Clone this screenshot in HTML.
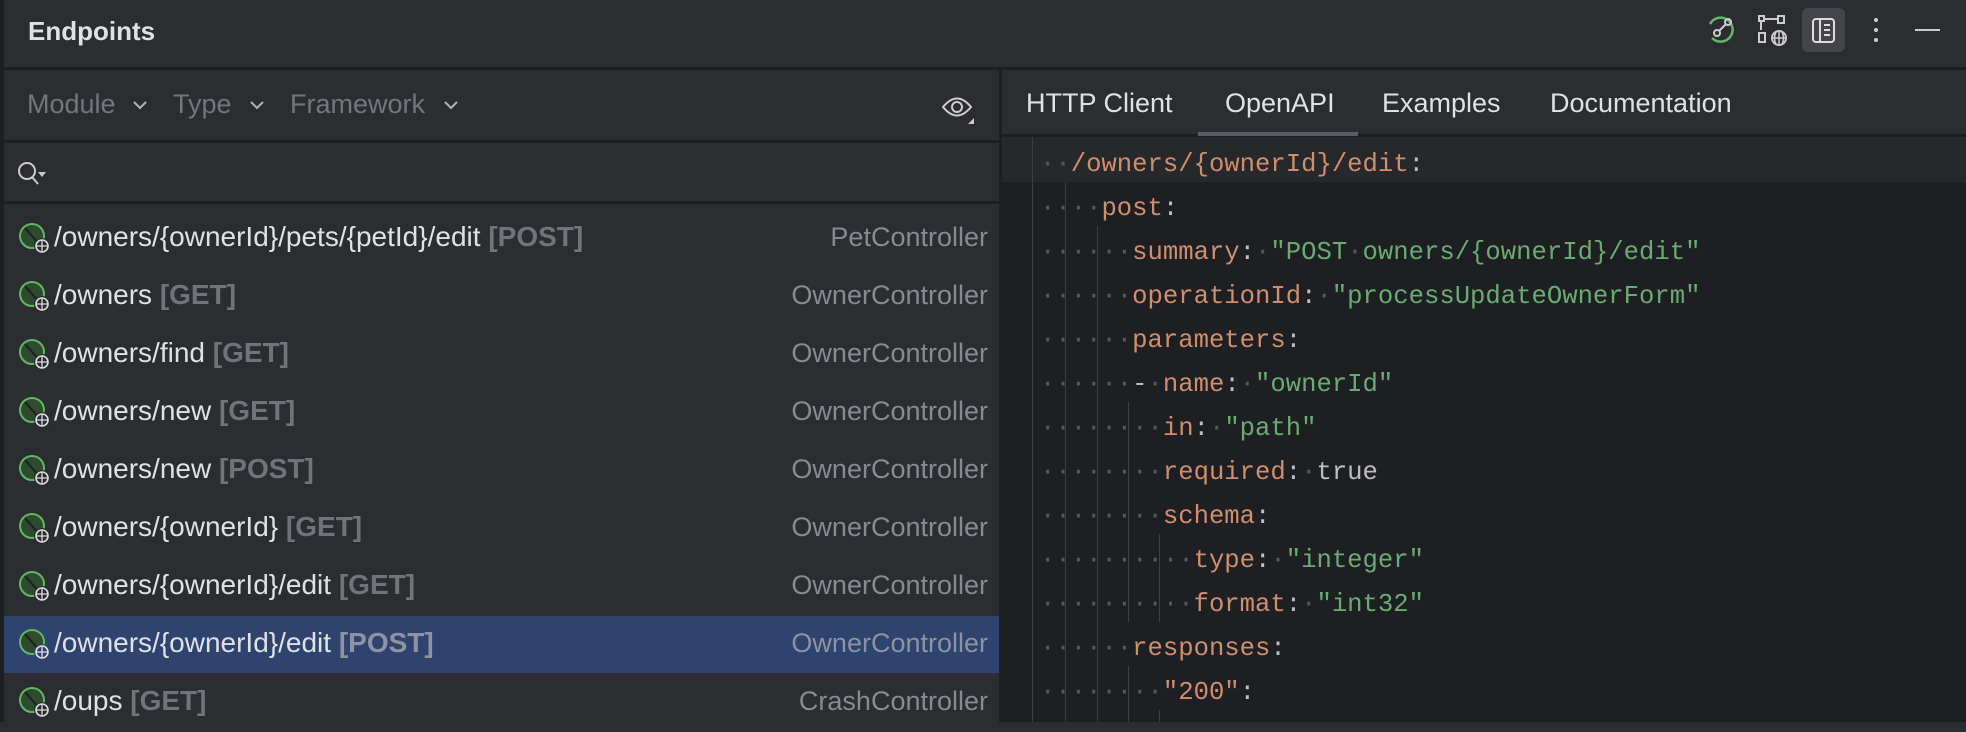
<!DOCTYPE html>
<html><head><meta charset="utf-8"><style>
*{margin:0;padding:0;box-sizing:border-box}
body{width:1966px;height:722px;background:#2b2d30;overflow:hidden;position:relative;font-family:"Liberation Sans",sans-serif;color:#dfe1e5}
.abs{position:absolute}
.hdr{left:0;top:0;width:1966px;height:70px;background:#2b2d30;border-bottom:3px solid #1e1f22}
.title{left:28px;top:16px;font-size:26px;font-weight:bold;color:#dfe1e5}
.filter{left:0;top:70px;width:999px;height:73px;border-bottom:3px solid #1e1f22}
.ftxt{top:89px;font-size:27px;color:#72767d}
.search{left:0;top:143px;width:999px;height:61px;border-bottom:3px solid #1e1f22}
.row{left:4px;width:995px;height:58px;font-size:27px}
.row .ic{position:absolute;left:14px;top:12px}
.row .p{position:absolute;left:50px;top:11px;color:#dfe1e5;white-space:pre;font-size:28px}
.row .p b{color:#6f737a}
.row .c{position:absolute;right:11px;top:12px;color:#868a91}
.sel{background:#2e436e}
.sel .p b,.sel .c{color:#8c93a3}
.div{left:999px;top:70px;width:3px;height:652px;background:#1e1f22}
.tabs{left:1002px;top:70px;width:964px;height:66px;background:#2b2d30;border-bottom:2px solid #1e1f22}
.tab{top:88px;font-size:27px;color:#dfe1e5}
.code{left:1002px;top:136px;width:964px;height:586px;background:#1e1f22}
.cl{position:absolute;left:1040px;font-family:"Liberation Mono",monospace;font-size:25.6px;white-space:pre;height:44px;line-height:44px}
.k{color:#cf8e6d}.s{color:#6aab73}.d{color:#55575c}.w{color:#bcbec4}
.g{position:absolute;width:1px;background:#3c3e42}
</style></head><body>
<div class="abs hdr"></div>
<div class="abs" style="left:0;top:0;width:4px;height:722px;background:#1e1f22"></div>
<div class="abs title">Endpoints</div>
<svg class="abs" style="left:1704px;top:12px" width="34" height="34" viewBox="0 0 34 34"><path d="M8 26 A12 12 0 1 0 6 12" fill="none" stroke="#5fb865" stroke-width="2.5"/><circle cx="13" cy="21" r="3" fill="none" stroke="#ccc" stroke-width="2"/><circle cx="24" cy="10" r="3" fill="none" stroke="#ccc" stroke-width="2"/><path d="M15 19 L22 12" stroke="#ccc" stroke-width="2"/></svg>
<svg class="abs" style="left:1756px;top:12px" width="34" height="34" viewBox="0 0 34 34"><rect x="3" y="4" width="5" height="5" fill="none" stroke="#ccc" stroke-width="2"/><rect x="22" y="4" width="6" height="7" fill="none" stroke="#ccc" stroke-width="2"/><path d="M9 7H21M5 10V18" stroke="#ccc" stroke-width="2"/><rect x="3" y="21" width="6" height="9" fill="none" stroke="#ccc" stroke-width="2"/><circle cx="23" cy="26" r="7" fill="none" stroke="#ccc" stroke-width="2"/><path d="M16 26H30M23 19V33M20 20Q17 26 20 32M26 20Q29 26 26 32" fill="none" stroke="#ccc" stroke-width="1.5"/></svg>
<div class="abs" style="left:1802px;top:8px;width:43px;height:44px;border-radius:6px;background:#43454a"></div>
<svg class="abs" style="left:1810px;top:17px" width="28" height="28" viewBox="0 0 28 28"><rect x="3" y="2" width="21" height="23" rx="3" fill="none" stroke="#ddd" stroke-width="2"/><path d="M10 3V24M14 8H20M14 13H20M14 18H20" stroke="#ddd" stroke-width="2"/></svg>
<div class="abs" style="left:1874px;top:18px;width:4px;height:4px;border-radius:2px;background:#ccc;box-shadow:0 10px 0 #ccc,0 20px 0 #ccc"></div>
<div class="abs" style="left:1915px;top:29px;width:25px;height:2px;background:#ccc"></div>

<div class="abs filter"></div>
<div class="abs ftxt" style="left:27px">Module</div>
<div class="abs ftxt" style="left:173px">Type</div>
<div class="abs ftxt" style="left:290px">Framework</div>
<svg class="abs" style="left:132px;top:99px" width="16" height="12" viewBox="0 0 16 12"><path d="M2 3L8 9L14 3" fill="none" stroke="#b0b3b8" stroke-width="2"/></svg>
<svg class="abs" style="left:249px;top:99px" width="16" height="12" viewBox="0 0 16 12"><path d="M2 3L8 9L14 3" fill="none" stroke="#b0b3b8" stroke-width="2"/></svg>
<svg class="abs" style="left:443px;top:99px" width="16" height="12" viewBox="0 0 16 12"><path d="M2 3L8 9L14 3" fill="none" stroke="#b0b3b8" stroke-width="2"/></svg>
<svg class="abs" style="left:940px;top:90px" width="36" height="36" viewBox="0 0 36 36"><path d="M3 17 Q17 0 31 17 Q17 34 3 17Z" fill="none" stroke="#ccc" stroke-width="2"/><circle cx="17" cy="17" r="5" fill="none" stroke="#ccc" stroke-width="2"/><path d="M34 28V34H28Z" fill="#ccc"/></svg>
<div class="abs search"></div>
<svg class="abs" style="left:16px;top:160px" width="34" height="30" viewBox="0 0 34 30"><circle cx="11" cy="11" r="8" fill="none" stroke="#ccc" stroke-width="2"/><path d="M16 17L22 24" stroke="#ccc" stroke-width="2"/><path d="M22 12H30L26 17Z" fill="#ccc"/></svg>

<div class="abs row" style="top:210px"><svg class="ic" width="34" height="34" viewBox="0 0 34 34"><circle cx="14" cy="14" r="12" fill="#2f4a2f" stroke="#5fb865" stroke-width="2"/><path d="M7 6L22 23" stroke="#1e1f22" stroke-width="2"/><circle cx="24" cy="24" r="8" fill="#2b2d30"/><circle cx="24" cy="24" r="6" fill="none" stroke="#ddd" stroke-width="1.6"/><path d="M18 24H30M24 18V30" stroke="#ddd" stroke-width="1.3"/></svg><span class="p">/owners/{ownerId}/pets/{petId}/edit <b>[POST]</b></span><span class="c">PetController</span></div>
<div class="abs row" style="top:268px"><svg class="ic" width="34" height="34" viewBox="0 0 34 34"><circle cx="14" cy="14" r="12" fill="#2f4a2f" stroke="#5fb865" stroke-width="2"/><path d="M7 6L22 23" stroke="#1e1f22" stroke-width="2"/><circle cx="24" cy="24" r="8" fill="#2b2d30"/><circle cx="24" cy="24" r="6" fill="none" stroke="#ddd" stroke-width="1.6"/><path d="M18 24H30M24 18V30" stroke="#ddd" stroke-width="1.3"/></svg><span class="p">/owners <b>[GET]</b></span><span class="c">OwnerController</span></div>
<div class="abs row" style="top:326px"><svg class="ic" width="34" height="34" viewBox="0 0 34 34"><circle cx="14" cy="14" r="12" fill="#2f4a2f" stroke="#5fb865" stroke-width="2"/><path d="M7 6L22 23" stroke="#1e1f22" stroke-width="2"/><circle cx="24" cy="24" r="8" fill="#2b2d30"/><circle cx="24" cy="24" r="6" fill="none" stroke="#ddd" stroke-width="1.6"/><path d="M18 24H30M24 18V30" stroke="#ddd" stroke-width="1.3"/></svg><span class="p">/owners/find <b>[GET]</b></span><span class="c">OwnerController</span></div>
<div class="abs row" style="top:384px"><svg class="ic" width="34" height="34" viewBox="0 0 34 34"><circle cx="14" cy="14" r="12" fill="#2f4a2f" stroke="#5fb865" stroke-width="2"/><path d="M7 6L22 23" stroke="#1e1f22" stroke-width="2"/><circle cx="24" cy="24" r="8" fill="#2b2d30"/><circle cx="24" cy="24" r="6" fill="none" stroke="#ddd" stroke-width="1.6"/><path d="M18 24H30M24 18V30" stroke="#ddd" stroke-width="1.3"/></svg><span class="p">/owners/new <b>[GET]</b></span><span class="c">OwnerController</span></div>
<div class="abs row" style="top:442px"><svg class="ic" width="34" height="34" viewBox="0 0 34 34"><circle cx="14" cy="14" r="12" fill="#2f4a2f" stroke="#5fb865" stroke-width="2"/><path d="M7 6L22 23" stroke="#1e1f22" stroke-width="2"/><circle cx="24" cy="24" r="8" fill="#2b2d30"/><circle cx="24" cy="24" r="6" fill="none" stroke="#ddd" stroke-width="1.6"/><path d="M18 24H30M24 18V30" stroke="#ddd" stroke-width="1.3"/></svg><span class="p">/owners/new <b>[POST]</b></span><span class="c">OwnerController</span></div>
<div class="abs row" style="top:500px"><svg class="ic" width="34" height="34" viewBox="0 0 34 34"><circle cx="14" cy="14" r="12" fill="#2f4a2f" stroke="#5fb865" stroke-width="2"/><path d="M7 6L22 23" stroke="#1e1f22" stroke-width="2"/><circle cx="24" cy="24" r="8" fill="#2b2d30"/><circle cx="24" cy="24" r="6" fill="none" stroke="#ddd" stroke-width="1.6"/><path d="M18 24H30M24 18V30" stroke="#ddd" stroke-width="1.3"/></svg><span class="p">/owners/{ownerId} <b>[GET]</b></span><span class="c">OwnerController</span></div>
<div class="abs row" style="top:558px"><svg class="ic" width="34" height="34" viewBox="0 0 34 34"><circle cx="14" cy="14" r="12" fill="#2f4a2f" stroke="#5fb865" stroke-width="2"/><path d="M7 6L22 23" stroke="#1e1f22" stroke-width="2"/><circle cx="24" cy="24" r="8" fill="#2b2d30"/><circle cx="24" cy="24" r="6" fill="none" stroke="#ddd" stroke-width="1.6"/><path d="M18 24H30M24 18V30" stroke="#ddd" stroke-width="1.3"/></svg><span class="p">/owners/{ownerId}/edit <b>[GET]</b></span><span class="c">OwnerController</span></div>
<div class="abs row sel" style="top:616px;height:57px"><svg class="ic" width="34" height="34" viewBox="0 0 34 34"><circle cx="14" cy="14" r="12" fill="#2f4a2f" stroke="#5fb865" stroke-width="2"/><path d="M7 6L22 23" stroke="#1e1f22" stroke-width="2"/><circle cx="24" cy="24" r="8" fill="#2e436e"/><circle cx="24" cy="24" r="6" fill="none" stroke="#ddd" stroke-width="1.6"/><path d="M18 24H30M24 18V30" stroke="#ddd" stroke-width="1.3"/></svg><span class="p">/owners/{ownerId}/edit <b>[POST]</b></span><span class="c">OwnerController</span></div>
<div class="abs row" style="top:674px"><svg class="ic" width="34" height="34" viewBox="0 0 34 34"><circle cx="14" cy="14" r="12" fill="#2f4a2f" stroke="#5fb865" stroke-width="2"/><path d="M7 6L22 23" stroke="#1e1f22" stroke-width="2"/><circle cx="24" cy="24" r="8" fill="#2b2d30"/><circle cx="24" cy="24" r="6" fill="none" stroke="#ddd" stroke-width="1.6"/><path d="M18 24H30M24 18V30" stroke="#ddd" stroke-width="1.3"/></svg><span class="p">/oups <b>[GET]</b></span><span class="c">CrashController</span></div>

<div class="abs div"></div>
<div class="abs tabs"></div>
<div class="abs tab" style="left:1026px">HTTP Client</div>
<div class="abs tab" style="left:1225px">OpenAPI</div>
<div class="abs tab" style="left:1382px">Examples</div>
<div class="abs tab" style="left:1550px">Documentation</div>
<div class="abs" style="left:1198px;top:132px;width:160px;height:5px;background:#5a5d63"></div>
<div class="abs code"></div>
<div class="abs" style="left:1002px;top:137px;width:964px;height:45px;background:#26282b"></div>
<div class="g" style="left:1032px;top:137px;height:585px"></div>
<div class="g" style="left:1065px;top:182px;height:540px"></div>
<div class="g" style="left:1097px;top:226px;height:496px"></div>
<div class="g" style="left:1128px;top:402px;height:220px"></div>
<div class="g" style="left:1159px;top:534px;height:88px"></div>
<div class="g" style="left:1128px;top:666px;height:56px"></div>
<div class="g" style="left:1159px;top:710px;height:12px"></div>

<div class="cl" style="top:143px"><span class="d">··</span><span class="k">/owners/{ownerId}/edit</span><span class="w">:</span></div>
<div class="cl" style="top:187px"><span class="d">····</span><span class="k">post</span><span class="w">:</span></div>
<div class="cl" style="top:231px"><span class="d">······</span><span class="k">summary</span><span class="w">:</span><span class="d">·</span><span class="s">"POST</span><span class="d">·</span><span class="s">owners/{ownerId}/edit"</span></div>
<div class="cl" style="top:275px"><span class="d">······</span><span class="k">operationId</span><span class="w">:</span><span class="d">·</span><span class="s">"processUpdateOwnerForm"</span></div>
<div class="cl" style="top:319px"><span class="d">······</span><span class="k">parameters</span><span class="w">:</span></div>
<div class="cl" style="top:363px"><span class="d">······</span><span class="w">-</span><span class="d">·</span><span class="k">name</span><span class="w">:</span><span class="d">·</span><span class="s">"ownerId"</span></div>
<div class="cl" style="top:407px"><span class="d">········</span><span class="k">in</span><span class="w">:</span><span class="d">·</span><span class="s">"path"</span></div>
<div class="cl" style="top:451px"><span class="d">········</span><span class="k">required</span><span class="w">:</span><span class="d">·</span><span class="w">true</span></div>
<div class="cl" style="top:495px"><span class="d">········</span><span class="k">schema</span><span class="w">:</span></div>
<div class="cl" style="top:539px"><span class="d">··········</span><span class="k">type</span><span class="w">:</span><span class="d">·</span><span class="s">"integer"</span></div>
<div class="cl" style="top:583px"><span class="d">··········</span><span class="k">format</span><span class="w">:</span><span class="d">·</span><span class="s">"int32"</span></div>
<div class="cl" style="top:627px"><span class="d">······</span><span class="k">responses</span><span class="w">:</span></div>
<div class="cl" style="top:671px"><span class="d">········</span><span class="k">"200"</span><span class="w">:</span></div>
</body></html>
